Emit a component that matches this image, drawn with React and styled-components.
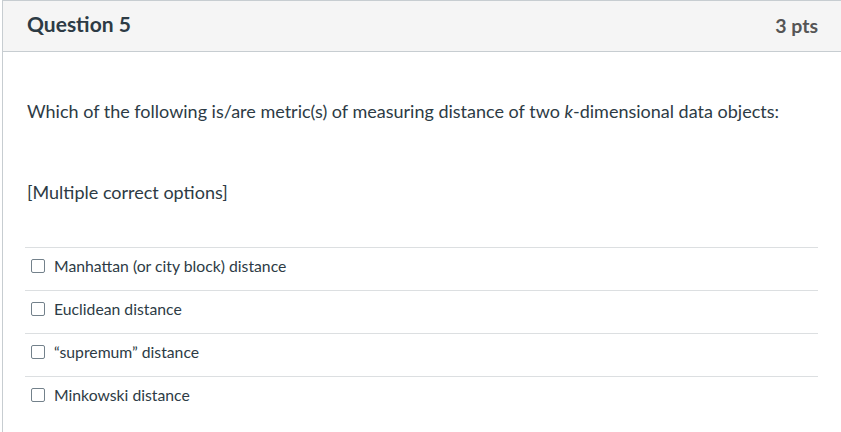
import React from "react";
import styled, { createGlobalStyle } from "styled-components";

const Global = createGlobalStyle`
  html, body { margin: 0; padding: 0; background: #fff; overflow: hidden; }
  body { font-family: Lato, "Open Sans", sans-serif; color: #2d3b45; }
`;

const Page = styled.div`
  width: 841px;
  height: 432px;
  overflow: hidden;
  padding-left: 2px;
  box-sizing: border-box;
`;

const Card = styled.div`
  width: 860px;
  border: 1px solid #c7cdd1;
  border-right: none;
  min-height: 440px;
  box-sizing: border-box;
`;

const Header = styled.div`
  display: flex;
  justify-content: space-between;
  align-items: center;
  height: 51px;
  background: #f5f5f5;
  border-bottom: 1px solid #c7cdd1;
  padding: 0 24px 0 24px;
  box-sizing: border-box;
  width: 839px;
`;

const Title = styled.div`
  font-size: 21px;
  font-weight: 700;
  color: #2d3b45;
  margin-bottom: 5px;
`;

const Points = styled.div`
  font-size: 19.5px;
  font-weight: 700;
  color: #555;
  margin-bottom: 2px;
`;

const Body = styled.div`
  padding: 0 24px 0 24px;
  width: 839px;
  box-sizing: border-box;
`;

const Text = styled.p`
  margin: 0;
  font-size: 18px;
  line-height: 24px;
  padding-top: ${(p) => p.$top}px;
`;

const Answers = styled.div`
  margin-top: 43px;
  margin-left: -2px;
`;

const Row = styled.label`
  display: flex;
  align-items: center;
  gap: 9px;
  height: 43px;
  box-sizing: border-box;
  border-top: 1px solid #dcdfe1;
  padding-left: 6px;
  padding-bottom: 8px;
  font-size: 15.75px;
  color: #2d3b45;
`;

const Box = styled.span`
  width: 12px;
  height: 12px;
  border: 1px solid #73818b;
  border-radius: 2px;
  background: #fff;
  flex: none;
  margin-top: 2px;
`;

const answers = [
  "Manhattan (or city block) distance",
  "Euclidean distance",
  "\u201Csupremum\u201D distance",
  "Minkowski distance",
];

export default function App() {
  return (
    <Page>
      <Global />
      <Card>
        <Header>
          <Title>Question 5</Title>
          <Points>3 pts</Points>
        </Header>
        <Body>
          <Text $top={47}>
            Which of the following is/are metric(s) of measuring distance of two <i>k</i>-dimensional data objects:
          </Text>
          <Text $top={57}>[Multiple correct options]</Text>
          <Answers>
            {answers.map((a) => (
              <Row key={a}>
                <Box />
                {a}
              </Row>
            ))}
          </Answers>
        </Body>
      </Card>
    </Page>
  );
}
